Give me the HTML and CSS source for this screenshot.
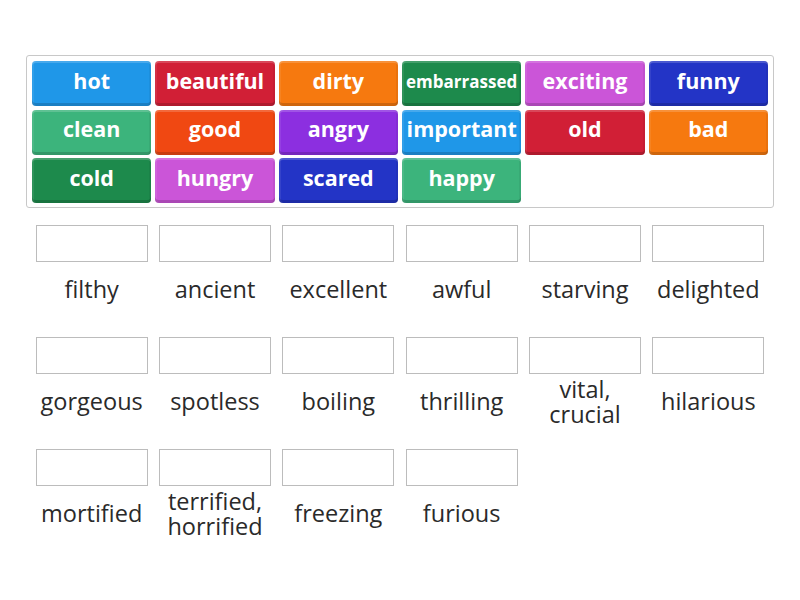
FILE: index.html
```html
<!DOCTYPE html>
<html>
<head>
<meta charset="utf-8">
<link rel="stylesheet" href="styles.css">
</head>
<body>
<div class="page">
  <div class="bank">
    <div class="tile blue">hot</div>
    <div class="tile red">beautiful</div>
    <div class="tile orange">dirty</div>
    <div class="tile dgreen small">embarrassed</div>
    <div class="tile pink">exciting</div>
    <div class="tile navy">funny</div>
    <div class="tile green">clean</div>
    <div class="tile vermilion">good</div>
    <div class="tile purple">angry</div>
    <div class="tile blue">important</div>
    <div class="tile red">old</div>
    <div class="tile orange">bad</div>
    <div class="tile dgreen">cold</div>
    <div class="tile pink">hungry</div>
    <div class="tile navy">scared</div>
    <div class="tile green">happy</div>
  </div>
  <div class="targets">
    <div class="cell"><div class="box"></div><div class="label">filthy</div></div>
    <div class="cell"><div class="box"></div><div class="label">ancient</div></div>
    <div class="cell"><div class="box"></div><div class="label">excellent</div></div>
    <div class="cell"><div class="box"></div><div class="label">awful</div></div>
    <div class="cell"><div class="box"></div><div class="label">starving</div></div>
    <div class="cell"><div class="box"></div><div class="label">delighted</div></div>
    <div class="cell"><div class="box"></div><div class="label">gorgeous</div></div>
    <div class="cell"><div class="box"></div><div class="label">spotless</div></div>
    <div class="cell"><div class="box"></div><div class="label">boiling</div></div>
    <div class="cell"><div class="box"></div><div class="label">thrilling</div></div>
    <div class="cell"><div class="box"></div><div class="label">vital,<br>crucial</div></div>
    <div class="cell"><div class="box"></div><div class="label">hilarious</div></div>
    <div class="cell"><div class="box"></div><div class="label">mortified</div></div>
    <div class="cell"><div class="box"></div><div class="label">terrified,<br>horrified</div></div>
    <div class="cell"><div class="box"></div><div class="label">freezing</div></div>
    <div class="cell"><div class="box"></div><div class="label">furious</div></div>
  </div>
</div>
</body>
</html>
```

FILE: styles.css
```css
html, body {
  margin: 0;
  padding: 0;
  background: #ffffff;
}
body {
  font-family: "Open Sans", "DejaVu Sans", sans-serif;
}
.page {
  padding: 55px 26px 0 26px;
}
.bank {
  border: 1px solid #c8c8c8;
  border-radius: 3px;
  padding: 5px 5px 4px 5px;
  display: grid;
  grid-template-columns: repeat(6, 1fr);
  column-gap: 4px;
  row-gap: 3.5px;
}
.tile {
  height: 45px;
  box-sizing: border-box;
  border-radius: 4px;
  color: #ffffff;
  font-weight: 700;
  font-size: 21.5px;
  display: flex;
  align-items: center;
  justify-content: center;
  padding-bottom: 7px;
  white-space: nowrap;
  box-shadow: inset 0 -3px 0 rgba(0,0,0,0.16), inset 0 2px 0 rgba(255,255,255,0.18), inset 2px 0 0 rgba(255,255,255,0.08), inset -2px 0 0 rgba(0,0,0,0.05);
}
.tile.small { font-size: 17px; padding-bottom: 5px; }
.blue { background: #1f97e8; }
.red { background: #d11f36; }
.orange { background: #f6790f; }
.dgreen { background: #1d8a4c; }
.pink { background: #cb55d8; }
.navy { background: #2334c6; }
.green { background: #3cb47c; }
.vermilion { background: #f04812; }
.purple { background: #8c2fe0; }

.targets {
  margin-top: 17px;
  padding: 0 6px;
  display: grid;
  grid-template-columns: repeat(6, 1fr);
  column-gap: 4px;
  row-gap: 20px;
}
.cell {
  display: flex;
  flex-direction: column;
  align-items: center;
}
.box {
  width: 112px;
  height: 37px;
  box-sizing: border-box;
  border: 1px solid #bcbcbc;
  background: #ffffff;
}
.label {
  height: 55px;
  display: flex;
  align-items: center;
  justify-content: center;
  text-align: center;
  font-size: 23.5px;
  line-height: 24.5px;
  color: #2a2a2a;
}
```
